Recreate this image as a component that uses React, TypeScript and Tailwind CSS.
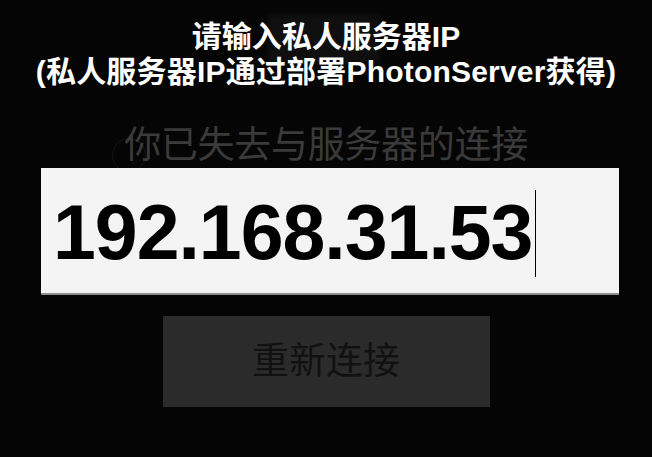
import React from 'react';

const FONT = "font-['Liberation_Sans','Noto_Sans_CJK_SC',sans-serif]";

export default function App() {
    return (
        <div className={`relative w-[652px] h-[457px] overflow-hidden bg-[#050505] ${FONT}`}>
            {/* dim game scene behind the dialog */}
            <div className="absolute left-[112px] top-[138px] w-[34px] h-[34px] rounded-full border border-[#151515]" />
            <div className="absolute left-[268px] top-[14px] w-[112px] h-[50px] bg-[#0f0f0f] blur-[2px]" />

            <div className="relative flex flex-col items-center pt-[19px]">
                <div className="text-center text-white font-bold text-[30px] leading-[35px]">
                    <div>请输入私人服务器IP</div>
                    <div className="tracking-[0.2px]">(私人服务器IP通过部署PhotonServer获得)</div>
                </div>

                <div className="mt-[37px] text-[37px] leading-[40px] text-[#3a3a3a] tracking-[-0.3px]">
                    你已失去与服务器的连接
                </div>

                <div className="mt-[2px] ml-[8px] w-[578px] h-[127px] bg-[#f4f4f4] border-b-2 border-[#8e8e8e] flex items-center pt-[4px] pl-[12px]">
                    <span className="text-[77px] leading-[77px] font-bold text-black tracking-[-1px]">
                        192.168.31.53
                    </span>
                    <span className="ml-[3px] w-px h-[87px] bg-black mt-[2px]" />
                </div>

                <button className="mt-[21px] w-[327px] h-[91px] bg-[#2b2b2b] flex items-center justify-center text-[37px] text-[#111111]">
                    重新连接
                </button>
            </div>
        </div>
    );
}
